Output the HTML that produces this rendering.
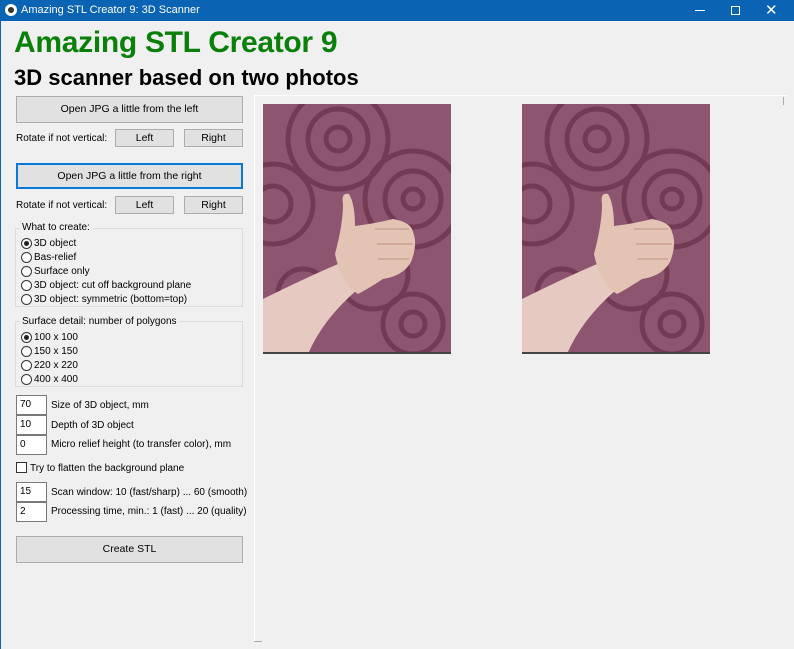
<!DOCTYPE html>
<html><head><meta charset="utf-8"><style>
*{margin:0;padding:0;box-sizing:border-box}
body{width:794px;height:649px;background:#f0f0f0;font-family:"Liberation Sans",sans-serif;font-size:10px;color:#000;position:relative;overflow:hidden}
.a{position:absolute;white-space:nowrap}
.btn{position:absolute;background:#e1e1e1;border:1px solid #adadad;text-align:center;font-size:10.5px}
.grp{position:absolute;border:1px solid #dcdcdc}
.in{position:absolute;background:#fff;border:1px solid #7a7a7a;padding:3px 0 0 3px;font-size:10px;width:31px;height:20px}
.rad{position:absolute;width:11px;height:11px;border:1px solid #333;border-radius:50%;background:#fff}
.rad.on::after{content:"";position:absolute;left:2px;top:2px;width:5px;height:5px;border-radius:50%;background:#222}
</style></head><body>
<div class="a" style="left:0;top:0;width:794px;height:21px;background:#0b63b4"></div>
<div class="a" style="left:0;top:0;width:1px;height:649px;background:#0b63b4"></div>
<div class="a" style="left:5px;top:4px;width:12px;height:12px;border-radius:50%;background:#fff"></div>
<div class="a" style="left:8px;top:7px;width:6px;height:6px;border-radius:50%;background:#333"></div>
<div class="a" style="left:21px;top:4px;color:#fff;font-size:11px">Amazing STL Creator 9: 3D Scanner</div>
<div class="a" style="left:695px;top:10px;width:10px;height:1px;background:#fff"></div>
<div class="a" style="left:731px;top:6px;width:9px;height:9px;border:1px solid #fff"></div>
<div class="a" style="left:765px;top:1px;color:#fff;font-size:15px">✕</div>

<div class="a" style="left:14px;top:26px;color:#0a800a;font-weight:bold;font-size:30px;letter-spacing:-0.3px">Amazing STL Creator 9</div>
<div class="a" style="left:14px;top:65px;font-weight:bold;font-size:22px">3D scanner based on two photos</div>

<div class="btn" style="left:16px;top:96px;width:227px;height:27px;line-height:25px">Open JPG a little from the left</div>
<div class="a" style="left:16px;top:133px">Rotate if not vertical:</div>
<div class="btn" style="left:115px;top:129px;width:59px;height:18px;line-height:16px">Left</div>
<div class="btn" style="left:184px;top:129px;width:59px;height:18px;line-height:16px">Right</div>
<div class="btn" style="left:16px;top:163px;width:227px;height:26px;line-height:22px;border:2px solid #0a78d7;background:#e1e1e1">Open JPG a little from the right</div>
<div class="a" style="left:16px;top:200px">Rotate if not vertical:</div>
<div class="btn" style="left:115px;top:196px;width:59px;height:18px;line-height:16px">Left</div>
<div class="btn" style="left:184px;top:196px;width:59px;height:18px;line-height:16px">Right</div>

<div class="grp" style="left:15px;top:228px;width:228px;height:79px"></div>
<div class="a" style="left:20px;top:222px;background:#f0f0f0;padding:0 2px">What to create:</div>
<div class="rad on" style="left:21px;top:238px"></div><div class="a" style="left:34px;top:238px">3D object</div>
<div class="rad" style="left:21px;top:252px"></div><div class="a" style="left:34px;top:252px">Bas-relief</div>
<div class="rad" style="left:21px;top:266px"></div><div class="a" style="left:34px;top:266px">Surface only</div>
<div class="rad" style="left:21px;top:280px"></div><div class="a" style="left:34px;top:280px">3D object: cut off background plane</div>
<div class="rad" style="left:21px;top:294px"></div><div class="a" style="left:34px;top:294px">3D object: symmetric (bottom=top)</div>

<div class="grp" style="left:15px;top:321px;width:228px;height:66px"></div>
<div class="a" style="left:20px;top:316px;background:#f0f0f0;padding:0 2px">Surface detail: number of polygons</div>
<div class="rad on" style="left:21px;top:332px"></div><div class="a" style="left:34px;top:332px">100 x 100</div>
<div class="rad" style="left:21px;top:346px"></div><div class="a" style="left:34px;top:346px">150 x 150</div>
<div class="rad" style="left:21px;top:360px"></div><div class="a" style="left:34px;top:360px">220 x 220</div>
<div class="rad" style="left:21px;top:374px"></div><div class="a" style="left:34px;top:374px">400 x 400</div>

<div class="in" style="left:16px;top:395px">70</div><div class="a" style="left:51px;top:400px">Size of 3D object, mm</div>
<div class="in" style="left:16px;top:415px">10</div><div class="a" style="left:51px;top:420px">Depth of 3D object</div>
<div class="in" style="left:16px;top:435px">0</div><div class="a" style="left:51px;top:439px">Micro relief height (to transfer color), mm</div>
<div class="a" style="left:16px;top:462px;width:11px;height:11px;border:1px solid #333;background:#fff"></div>
<div class="a" style="left:30px;top:463px">Try to flatten the background plane</div>
<div class="in" style="left:16px;top:482px">15</div><div class="a" style="left:51px;top:487px">Scan window: 10 (fast/sharp) ... 60 (smooth)</div>
<div class="in" style="left:16px;top:502px">2</div><div class="a" style="left:51px;top:506px">Processing time, min.: 1 (fast) ... 20 (quality)</div>
<div class="btn" style="left:16px;top:536px;width:227px;height:27px;line-height:25px">Create STL</div>

<div class="a" style="left:254px;top:95px;width:534px;height:1px;background:#fff"></div>
<div class="a" style="left:254px;top:95px;width:1px;height:546px;background:#fff"></div>
<div class="a" style="left:254px;top:641px;width:8px;height:1px;background:#aaa"></div>
<div class="a" style="left:783px;top:97px;width:1px;height:8px;background:#aaa"></div>

<svg class="a" style="left:263px;top:104px" width="188" height="250" viewBox="0 0 188 250">
<defs><g id="ph">
<rect width="188" height="250" fill="#8e5571"/>
<g fill="none" stroke="#6a3049" stroke-width="5" opacity=".7">
<circle cx="75" cy="35" r="12"/><circle cx="75" cy="35" r="30"/><circle cx="75" cy="35" r="50"/>
<circle cx="150" cy="95" r="10"/><circle cx="150" cy="95" r="28"/><circle cx="150" cy="95" r="48"/>
<circle cx="10" cy="100" r="18"/><circle cx="10" cy="100" r="40"/>
<circle cx="40" cy="190" r="25"/><circle cx="150" cy="220" r="30"/><circle cx="150" cy="220" r="12"/>
<circle cx="110" cy="170" r="35"/>
</g>
<path d="M0 250 L0 195 Q40 175 75 160 L95 185 Q60 215 45 250 Z" fill="#e6c9c0"/>
<path d="M72 150 Q80 120 80 100 Q78 88 86 90 Q92 100 92 122 Q110 120 130 115 Q148 118 150 128 Q155 140 148 158 Q140 172 120 175 Q105 185 95 190 Q78 180 72 150 Z" fill="#e2c3b4"/>
<path d="M112 125 L146 125 M114 140 L150 140 M115 155 L146 155" stroke="#c9a394" stroke-width="1.5"/>
</g></defs>
<use href="#ph"/>
<rect x="0" y="248" width="188" height="2" fill="#444"/>
</svg>
<svg class="a" style="left:522px;top:104px" width="188" height="250" viewBox="0 0 188 250">
<use href="#ph"/>
<rect x="0" y="248" width="188" height="2" fill="#444"/>
</svg>
</body></html>
